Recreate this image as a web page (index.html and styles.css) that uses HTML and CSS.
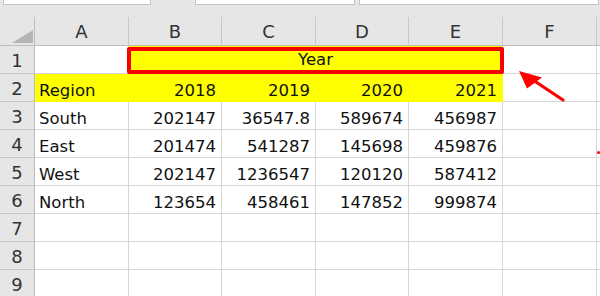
FILE: index.html
```html
<!DOCTYPE html>
<html>
<head>
<meta charset="utf-8">
<link rel="stylesheet" href="styles.css">
</head>
<body>
<div class="sheet">
  <div class="topbar">
    <div class="box box-name"></div>
    <div class="box box-mid"></div>
    <div class="box box-formula"></div>
  </div>
  <div class="grid">
    <div class="corner"><svg width="21" height="13" viewBox="0 0 21 13"><polygon points="21,0 21,13 0,13" fill="#b5b5b5"/></svg></div>
    <div class="colhead">A</div>
    <div class="colhead">B</div>
    <div class="colhead">C</div>
    <div class="colhead">D</div>
    <div class="colhead">E</div>
    <div class="colhead">F</div>
    <div class="colhead"></div>

    <div class="rowhead">1</div>
    <div class="cell"></div>
    <div class="cell merged">Year</div>
    <div class="cell"></div>
    <div class="cell"></div>

    <div class="rowhead">2</div>
    <div class="cell fill">Region</div>
    <div class="cell fill num">2018</div>
    <div class="cell fill num">2019</div>
    <div class="cell fill num">2020</div>
    <div class="cell fill num">2021</div>
    <div class="cell"></div>
    <div class="cell"></div>

    <div class="rowhead">3</div>
    <div class="cell">South</div>
    <div class="cell num">202147</div>
    <div class="cell num">36547.8</div>
    <div class="cell num">589674</div>
    <div class="cell num">456987</div>
    <div class="cell"></div>
    <div class="cell"></div>

    <div class="rowhead">4</div>
    <div class="cell">East</div>
    <div class="cell num">201474</div>
    <div class="cell num">541287</div>
    <div class="cell num">145698</div>
    <div class="cell num">459876</div>
    <div class="cell"></div>
    <div class="cell"></div>

    <div class="rowhead">5</div>
    <div class="cell">West</div>
    <div class="cell num">202147</div>
    <div class="cell num">1236547</div>
    <div class="cell num">120120</div>
    <div class="cell num">587412</div>
    <div class="cell"></div>
    <div class="cell"></div>

    <div class="rowhead">6</div>
    <div class="cell">North</div>
    <div class="cell num">123654</div>
    <div class="cell num">458461</div>
    <div class="cell num">147852</div>
    <div class="cell num">999874</div>
    <div class="cell"></div>
    <div class="cell"></div>

    <div class="rowhead">7</div>
    <div class="cell"></div><div class="cell"></div><div class="cell"></div><div class="cell"></div><div class="cell"></div><div class="cell"></div><div class="cell"></div>

    <div class="rowhead">8</div>
    <div class="cell"></div><div class="cell"></div><div class="cell"></div><div class="cell"></div><div class="cell"></div><div class="cell"></div><div class="cell"></div>

    <div class="rowhead">9</div>
    <div class="cell"></div><div class="cell"></div><div class="cell"></div><div class="cell"></div><div class="cell"></div><div class="cell"></div><div class="cell"></div>
  </div>

  <svg class="arrow" width="600" height="296" viewBox="0 0 600 296">
    <line x1="563" y1="100" x2="530" y2="78" stroke="#ff0000" stroke-width="3.2" stroke-linecap="round"/>
    <polygon points="519,71 542,77.5 527,88.5" fill="#ff0000"/>
  </svg>
  <span class="mark"></span>
</div>
</body>
</html>
```

FILE: styles.css
```css
* {
  box-sizing: border-box;
}

html, body {
  margin: 0;
  padding: 0;
  background: #ffffff;
}

.sheet {
  position: relative;
  width: 600px;
  height: 296px;
  overflow: hidden;
  background: #ffffff;
  font-family: "DejaVu Sans", "Liberation Sans", sans-serif;
  color: #000000;
}

.topbar {
  display: flex;
  align-items: flex-start;
  height: 17px;
  padding-left: 3px;
  background: #e6e6e6;
}

.box {
  height: 5px;
  background: #ffffff;
  border: 1px solid #c4c4c4;
  border-top: none;
}

.box-name {
  width: 148px;
}

.box-mid {
  width: 160px;
  margin-left: 44px;
}

.box-formula {
  width: 240px;
  margin-left: 4px;
}

.grid {
  display: grid;
  grid-template-columns: 35px 94px 93px 94px 93px 94px 94px 94px;
  grid-template-rows: 29px;
  grid-auto-rows: 28px;
}

.corner {
  display: flex;
  justify-content: flex-end;
  align-items: flex-end;
  padding: 0 1px 2px 0;
  background: #e6e6e6;
  border-right: 1px solid #bdbdbd;
  border-bottom: 1px solid #bdbdbd;
}

.corner svg {
  display: block;
}

.colhead {
  background: #e6e6e6;
  border-right: 1px solid #c8c8c8;
  border-bottom: 1px solid #bdbdbd;
  text-align: center;
  font-size: 18px;
  line-height: 20px;
  padding-top: 5px;
  color: #333333;
}

.rowhead {
  background: #e6e6e6;
  border-right: 1px solid #bdbdbd;
  border-bottom: 1px solid #c8c8c8;
  text-align: center;
  font-size: 18px;
  line-height: 21px;
  padding-top: 4px;
  color: #333333;
}

.cell {
  border-right: 1px solid #d6d6d6;
  border-bottom: 1px solid #d6d6d6;
  font-size: 16.5px;
  line-height: 21px;
  padding: 6px 4px 0 4px;
  white-space: nowrap;
  overflow: hidden;
  background: #ffffff;
  color: #111111;
}

.num {
  text-align: right;
  padding-right: 5px;
}

.fill {
  background: #ffff00;
  border-right-color: #ffff00;
  border-bottom-color: #ffff00;
}

.merged {
  grid-column: span 4;
  position: relative;
  overflow: visible;
  background: #ffff00;
  text-align: center;
  padding-top: 3px;
  padding-left: 0;
  padding-right: 0;
  border-bottom-color: #ffff00;
}

.merged::after {
  content: "";
  position: absolute;
  left: -2px;
  right: -2px;
  top: 1px;
  bottom: -1px;
  border: 4px solid #f60000;
  border-radius: 2px;
}

.arrow {
  position: absolute;
  left: 0;
  top: 0;
  pointer-events: none;
}

.mark {
  position: absolute;
  left: 597px;
  top: 151px;
  width: 3px;
  height: 3px;
  border-radius: 50%;
  background: #ff0000;
}
```
